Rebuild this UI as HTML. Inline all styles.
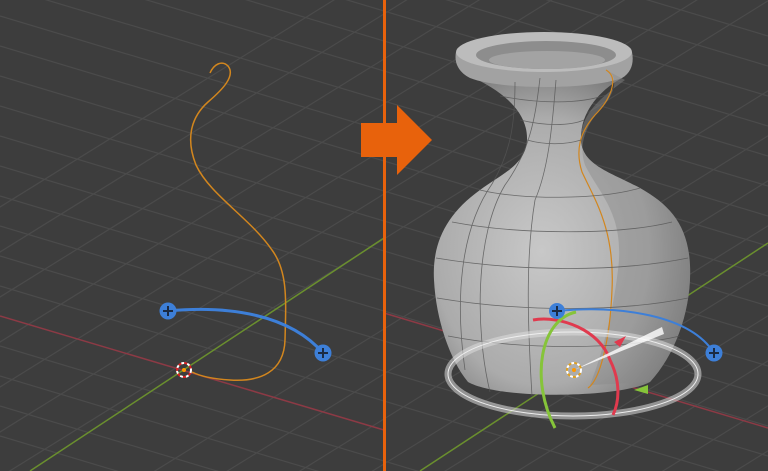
<!DOCTYPE html>
<html><head><meta charset="utf-8"><style>
html,body{margin:0;padding:0;background:#3d3d3d;width:768px;height:471px;overflow:hidden}
svg{display:block}
</style></head><body>
<svg width="768" height="471" viewBox="0 0 768 471" xmlns="http://www.w3.org/2000/svg">
<defs>
<radialGradient id="vg" cx="0.42" cy="0.55" r="0.6">
<stop offset="0" stop-color="#c8c8c8"/><stop offset="0.7" stop-color="#ababab"/><stop offset="1" stop-color="#7a7a7a"/>
</radialGradient>
<g id="grid" stroke="#4b4b4b" stroke-width="1.2">
<line x1="0" y1="-44" x2="768" y2="186"/><line x1="0" y1="-14" x2="768" y2="216"/>
<line x1="0" y1="16" x2="768" y2="246"/><line x1="0" y1="46" x2="768" y2="276"/>
<line x1="0" y1="76" x2="768" y2="306"/><line x1="0" y1="106" x2="768" y2="336"/>
<line x1="0" y1="136" x2="768" y2="366"/><line x1="0" y1="166" x2="768" y2="396"/>
<line x1="0" y1="196" x2="768" y2="426"/><line x1="0" y1="226" x2="768" y2="456"/>
<line x1="0" y1="256" x2="768" y2="486"/><line x1="0" y1="286" x2="768" y2="516"/>
<line x1="0" y1="346" x2="768" y2="576"/><line x1="0" y1="376" x2="768" y2="606"/>
<line x1="0" y1="406" x2="768" y2="636"/><line x1="0" y1="436" x2="768" y2="666"/>
<line x1="0" y1="-74" x2="768" y2="156"/><line x1="0" y1="-104" x2="768" y2="126"/>
<line x1="0" y1="-134" x2="768" y2="96"/><line x1="0" y1="-164" x2="768" y2="66"/>
<line x1="0" y1="-194" x2="768" y2="36"/>
<line x1="-200" y1="331" x2="800" y2="-289"/><line x1="-200" y1="376" x2="800" y2="-244"/>
<line x1="-200" y1="421" x2="800" y2="-199"/><line x1="-200" y1="466" x2="800" y2="-154"/>
<line x1="-200" y1="511" x2="800" y2="-109"/><line x1="-200" y1="556" x2="800" y2="-64"/>
<line x1="-200" y1="601" x2="800" y2="-19"/><line x1="-200" y1="691" x2="800" y2="71"/>
<line x1="-200" y1="736" x2="800" y2="116"/><line x1="-200" y1="781" x2="800" y2="161"/>
<line x1="-200" y1="826" x2="800" y2="206"/><line x1="-200" y1="871" x2="800" y2="251"/>
<line x1="-200" y1="916" x2="800" y2="296"/><line x1="-200" y1="961" x2="800" y2="341"/>
<line x1="-200" y1="1006" x2="800" y2="386"/><line x1="-200" y1="1051" x2="800" y2="431"/>
</g>
</defs>
<rect width="768" height="471" fill="#3d3d3d"/>
<use href="#grid"/>
<line x1="0" y1="316" x2="384" y2="430" stroke="#8c3a45" stroke-width="1.5"/>
<line x1="30" y1="471" x2="384" y2="238" stroke="#6a8f2e" stroke-width="1.5"/>
<line x1="384" y1="313" x2="768" y2="428" stroke="#8c3a45" stroke-width="1.5"/>
<line x1="420" y1="471" x2="768" y2="243" stroke="#6a8f2e" stroke-width="1.5"/>

<path d="M210 73 C214 64 222 60 228 66 C236 76 222 90 208 102 C190 118 186 140 196 165 C210 195 250 218 272 250 C288 272 286 300 285 340 C284 372 260 382 230 380 C212 379 200 376 192 372" fill="none" stroke="#d2861e" stroke-width="1.5"/>
<path d="M168 311 C230 305 290 315 323 353" fill="none" stroke="#3d7fd8" stroke-width="3"/>
<circle cx="168" cy="311" r="8.5" fill="#3d7fd8"/><path d="M163 311h10M168 306v10" stroke="#1b2b44" stroke-width="2"/>
<circle cx="323" cy="353" r="8.5" fill="#3d7fd8"/><path d="M318 353h10M323 348v10" stroke="#1b2b44" stroke-width="2"/>
<circle cx="184" cy="370" r="7" fill="none" stroke="#fff" stroke-width="2" stroke-dasharray="3 3"/>
<circle cx="184" cy="370" r="7" fill="none" stroke="#d22" stroke-width="2" stroke-dasharray="3 3" stroke-dashoffset="3"/>
<circle cx="184" cy="370" r="2" fill="#f90"/>

<!-- vase body -->
<path d="M470 76 C500 90 528 110 527 140 C526 165 500 175 480 190 C445 215 432 245 434 280 C436 320 450 360 468 382 C500 400 620 398 650 382 C675 355 692 310 690 265 C688 225 670 205 640 188 C610 172 582 165 581 140 C580 112 600 90 622 78 Z" fill="url(#vg)"/>
<!-- rim -->
<path d="M456 52 C454 62 458 72 470 78 C500 90 590 90 622 78 C632 72 634 62 632 52 Z" fill="#a2a2a2"/>
<ellipse cx="544" cy="52" rx="88" ry="20" fill="#bcbcbc"/>
<ellipse cx="546" cy="55" rx="70" ry="14" fill="#8d8d8d"/>
<ellipse cx="547" cy="60" rx="58" ry="9" fill="#a3a3a3"/>
<path d="M606 70 C620 75 615 95 600 110 C586 125 578 145 585 165 C600 195 625 215 618 270 C612 320 600 360 590 385 L650 382 C675 355 692 310 690 265 C688 225 670 205 640 188 C610 172 582 165 581 140 C580 112 605 95 625 80 Z" fill="#8a8a8a" opacity="0.45"/>
<path d="M606 70 C620 78 610 100 595 115 C580 132 575 150 582 172 C595 200 615 230 612 290 C610 340 600 380 588 388" fill="none" stroke="#d2861e" stroke-width="1.2"/>
<g fill="none" stroke="#555" stroke-width="0.8" opacity="0.8">
<path d="M480 190 C520 200 600 200 640 188"/>
<path d="M452 222 C520 235 620 235 672 222"/>
<path d="M436 258 C520 272 620 272 688 258"/>
<path d="M437 298 C520 312 620 312 688 298"/>
<path d="M448 336 C520 350 620 350 680 336"/>
<path d="M527 140 C545 145 565 145 581 140"/>
<path d="M500 96 C540 104 580 104 606 95"/>
<path d="M520 120 C545 126 570 126 584 120"/>
<path d="M540 78 C535 120 530 150 505 185 C475 235 475 330 490 392"/>
<path d="M556 80 C552 130 548 170 535 200 C525 260 528 330 532 396"/>
<path d="M515 82 C515 120 512 150 492 184 C460 230 455 300 465 370"/>
</g>
<ellipse cx="573" cy="374" rx="125" ry="42" fill="none" stroke="#ddd" stroke-width="7" opacity="0.55"/>
<ellipse cx="573" cy="374" rx="125" ry="42" fill="none" stroke="#eee" stroke-width="1"/>
<path d="M533 320 C560 315 600 330 610 360 C620 380 620 400 613 415" fill="none" stroke="#e03a4e" stroke-width="3"/>
<path d="M576 312 C540 320 530 380 555 428" fill="none" stroke="#86c43a" stroke-width="3"/>
<path d="M557 311 C620 305 690 315 714 353" fill="none" stroke="#3d7fd8" stroke-width="2"/>
<circle cx="557" cy="311" r="8" fill="#3d7fd8"/><path d="M552 311h10M557 306v10" stroke="#1b2b44" stroke-width="2"/>
<circle cx="714" cy="353" r="8.5" fill="#3d7fd8"/><path d="M709 353h10M714 348v10" stroke="#1b2b44" stroke-width="2"/>
<path d="M574 370 L662 327 L664 334 Z" fill="#fff" opacity="0.8"/>
<path d="M614 342 L626 336 L620 347 Z" fill="#e03a4e"/>
<path d="M634 390 L648 385 L648 394 Z" fill="#86c43a"/>
<circle cx="574" cy="370" r="7" fill="none" stroke="#fff" stroke-width="2" stroke-dasharray="3 3"/>
<circle cx="574" cy="370" r="7" fill="none" stroke="#e0a020" stroke-width="2" stroke-dasharray="3 3" stroke-dashoffset="3"/>
<circle cx="574" cy="370" r="2" fill="#f90"/>
<rect x="383" y="0" width="3" height="471" fill="#e8620c"/>
<path d="M361 123 H397 V105 L432 140 L397 175 V157 H361 Z" fill="#e8620c"/>
</svg>
</body></html>
